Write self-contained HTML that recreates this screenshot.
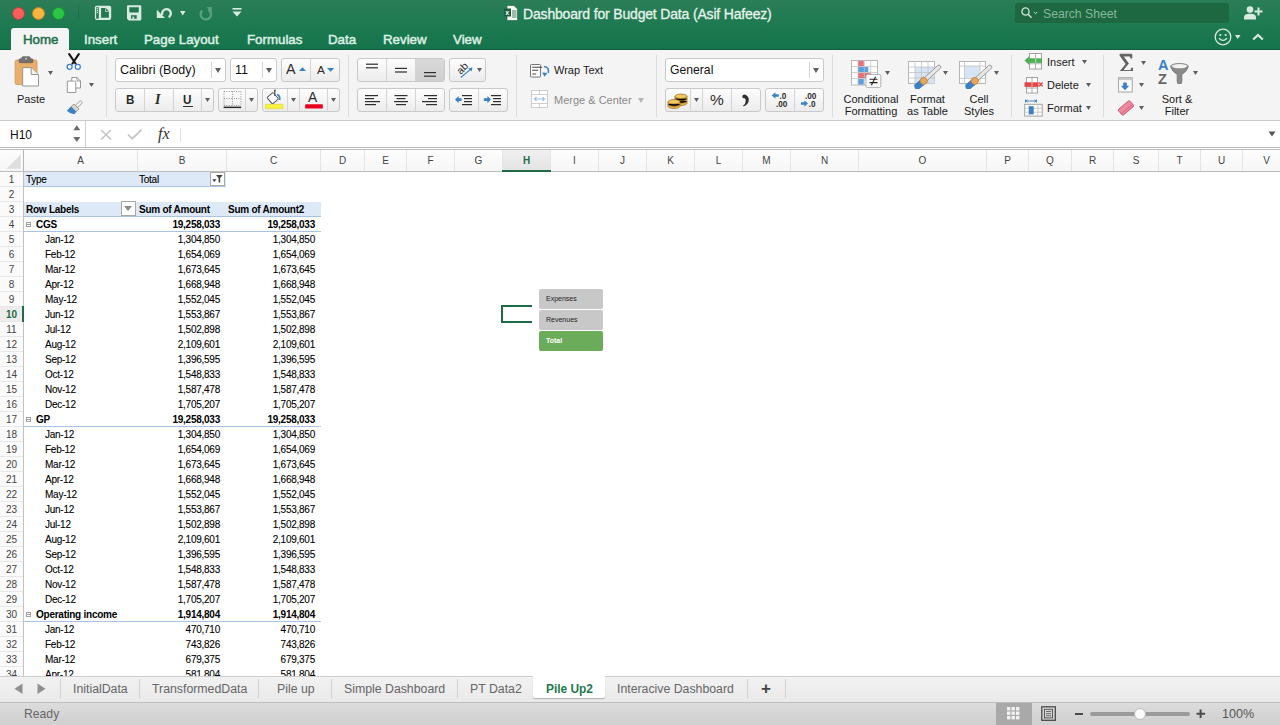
<!DOCTYPE html><html><head><meta charset="utf-8"><style>
*{margin:0;padding:0;box-sizing:border-box}
html,body{width:1280px;height:725px;overflow:hidden;background:#fff;font-family:"Liberation Sans",sans-serif;}
.a{position:absolute}
#title{left:0;top:0;width:1280px;height:50px;background:linear-gradient(#2b7d57,#1d7a51 50%,#15734b);}
.tl{position:absolute;top:7px;width:12px;height:12px;border-radius:50%}
.tab{position:absolute;top:29px;height:22px;font-size:13.3px;color:#dfece4;line-height:22px;white-space:nowrap;-webkit-text-stroke:0.5px}
#ribbon{left:0;top:50px;width:1280px;height:71px;background:#f4f4f4;border-bottom:1px solid #c9c9c9}
.sep{position:absolute;width:1px;background:#dcdcdc;top:55px;height:62px}
.btn{position:absolute;border:1px solid #c9c9c9;border-radius:3px;background:linear-gradient(#fdfdfd,#ececec)}
.box{position:absolute;border:1px solid #c9c9c9;border-radius:3px;background:#fff}
.dv{position:absolute;width:1px;background:#d4d4d4}
.rl{position:absolute;font-size:11px;color:#1a1a1a;white-space:nowrap;line-height:13px;margin-top:1px}
.tri{position:absolute;width:0;height:0;border-left:3.5px solid transparent;border-right:3.5px solid transparent;border-top:5px solid #5f5f5f}
#fbar{left:0;top:121px;width:1280px;height:26px;background:#fff}
#colhdr{left:0;top:150px;width:1280px;height:22px;background:linear-gradient(#fdfdfd,#f6f6f6);border-bottom:1px solid #bdbdbd}
.ch{position:absolute;top:150px;height:21px;font-size:10px;color:#444;text-align:center;line-height:22px;border-right:1px solid #e4e4e4}
.rh{position:absolute;left:0;width:23px;height:15px;font-size:10px;color:#444;text-align:center;line-height:15px;border-bottom:1px solid #e8e8e8;background:#fafafa}
.c{position:absolute;height:15px;font-size:10px;line-height:15px;margin-top:0px;letter-spacing:-0.25px;color:#000;white-space:nowrap;-webkit-text-stroke:0.1px #000}
.b{-webkit-text-stroke:0}
.r{text-align:right}
.b{font-weight:bold}
#tabs{left:0;top:676px;width:1280px;height:26px;background:linear-gradient(#f2f2f2,#e9e9e9);border-top:1px solid #cfcfcf}
.st{position:absolute;top:0;height:25px;line-height:26px;font-size:12.3px;color:#666;white-space:nowrap}
.sd{position:absolute;top:3px;width:1px;height:19px;background:#d2d2d2}
#status{left:0;top:702px;width:1280px;height:23px;background:linear-gradient(#dcdcdc,#cfcfcf);border-top:1px solid #bdbdbd}
</style></head><body>
<div id="title" class="a"></div>
<div class="a" style="left:0;top:49px;width:1280px;height:1px;background:#14603e"></div>
<div class="tl" style="left:12px;top:7px;width:13px;height:13px;background:#f5605c;border:1px solid #b8423c"></div>
<div class="tl" style="left:32px;top:7px;width:13px;height:13px;background:#fbb53e;border:1px solid #b8862a"></div>
<div class="tl" style="left:52px;top:7px;width:13px;height:13px;background:#2bc544;border:1px solid #1d8f33"></div>
<div class="a" style="left:78px;top:4px;width:1px;height:17px;background:#246f4b"></div>
<div class="a" style="left:523px;top:5px;font-size:14px;letter-spacing:-0.17px;color:#e4f5ec;line-height:18px;white-space:nowrap;-webkit-text-stroke:0.3px #e7f1eb">Dashboard for Budget Data (Asif Hafeez)</div>
<div class="a" style="left:1015px;top:3px;width:214px;height:20px;border-radius:3px;background:#1d6841"></div>
<div class="a" style="left:1043px;top:5px;font-size:12.2px;color:#86b89c;line-height:18px">Search Sheet</div>
<div class="a" style="left:11px;top:28px;width:58px;height:22px;background:#f4f4f4;border-radius:3px 3px 0 0"></div>
<div class="tab" style="left:23px;color:#216e4a">Home</div>
<div class="tab" style="left:84px;color:#dcefe3">Insert</div>
<div class="tab" style="left:144px;color:#dcefe3">Page Layout</div>
<div class="tab" style="left:247px;color:#dcefe3">Formulas</div>
<div class="tab" style="left:328px;color:#dcefe3">Data</div>
<div class="tab" style="left:383px;color:#dcefe3">Review</div>
<div class="tab" style="left:453px;color:#dcefe3">View</div>
<div id="ribbon" class="a"></div>
<div class="sep" style="left:106px"></div>
<div class="sep" style="left:348px"></div>
<div class="sep" style="left:516px"></div>
<div class="sep" style="left:656px"></div>
<div class="sep" style="left:832px"></div>
<div class="sep" style="left:1011px"></div>
<div class="sep" style="left:1103px"></div>
<div class="rl" style="left:17px;top:92px">Paste</div>
<div class="box" style="left:115px;top:58px;width:111px;height:24px"></div>
<div class="dv" style="left:211px;top:62px;height:16px"></div>
<div class="a" style="left:120px;top:63px;font-size:12.5px;color:#111;line-height:14px">Calibri (Body)</div>
<div class="tri" style="left:215px;top:68px"></div>
<div class="box" style="left:230px;top:58px;width:47px;height:24px"></div>
<div class="dv" style="left:262px;top:62px;height:16px"></div>
<div class="a" style="left:235px;top:63px;font-size:12.5px;color:#111;line-height:14px">11</div>
<div class="tri" style="left:266px;top:68px"></div>
<div class="btn" style="left:281px;top:58px;width:59px;height:24px"></div>
<div class="dv" style="left:310px;top:59px;height:22px"></div>
<div class="btn" style="left:115px;top:88px;width:99px;height:24px"></div>
<div class="dv" style="left:144px;top:89px;height:22px"></div>
<div class="dv" style="left:173px;top:89px;height:22px"></div>
<div class="dv" style="left:201px;top:89px;height:22px"></div>
<div class="btn" style="left:218px;top:88px;width:40px;height:24px"></div>
<div class="dv" style="left:245px;top:89px;height:22px"></div>
<div class="btn" style="left:262px;top:88px;width:78px;height:24px"></div>
<div class="dv" style="left:287px;top:89px;height:22px"></div>
<div class="dv" style="left:299px;top:89px;height:22px"></div>
<div class="dv" style="left:327px;top:89px;height:22px"></div>
<div class="btn" style="left:357px;top:58px;width:88px;height:24px"></div>
<div class="a" style="left:416px;top:59px;width:28px;height:22px;background:linear-gradient(#d9d9d9,#cfcfcf);border-radius:0 2px 2px 0"></div>
<div class="dv" style="left:386px;top:59px;height:22px"></div>
<div class="dv" style="left:415px;top:59px;height:22px"></div>
<div class="btn" style="left:449px;top:58px;width:37px;height:24px"></div>
<div class="btn" style="left:357px;top:88px;width:88px;height:24px"></div>
<div class="dv" style="left:386px;top:89px;height:22px"></div>
<div class="dv" style="left:415px;top:89px;height:22px"></div>
<div class="btn" style="left:449px;top:88px;width:59px;height:24px"></div>
<div class="dv" style="left:478px;top:89px;height:22px"></div>
<div class="rl" style="left:554px;top:63px">Wrap Text</div>
<div class="rl" style="left:554px;top:93px;color:#8a8a8a">Merge &amp; Center</div>
<div class="tri" style="left:638px;top:98px;border-top-color:#b5b5b5"></div>
<div class="box" style="left:665px;top:58px;width:159px;height:24px"></div>
<div class="dv" style="left:809px;top:62px;height:16px"></div>
<div class="a" style="left:670px;top:63px;font-size:12.2px;color:#111;line-height:14px">General</div>
<div class="tri" style="left:813px;top:68px"></div>
<div class="btn" style="left:665px;top:88px;width:96px;height:24px"></div>
<div class="dv" style="left:690px;top:89px;height:22px"></div>
<div class="dv" style="left:702px;top:89px;height:22px"></div>
<div class="dv" style="left:731px;top:89px;height:22px"></div>
<div class="btn" style="left:765px;top:88px;width:59px;height:24px"></div>
<div class="dv" style="left:794px;top:89px;height:22px"></div>
<div class="rl" style="left:842px;top:92px;width:58px;text-align:center;line-height:12px">Conditional<br>Formatting</div>
<div class="rl" style="left:906px;top:92px;width:43px;text-align:center;line-height:12px">Format<br>as Table</div>
<div class="rl" style="left:959px;top:92px;width:40px;text-align:center;line-height:12px">Cell<br>Styles</div>
<div class="rl" style="left:1047px;top:55px">Insert</div>
<div class="rl" style="left:1047px;top:78px">Delete</div>
<div class="rl" style="left:1047px;top:101px">Format</div>
<div class="rl" style="left:1159px;top:92px;width:36px;text-align:center;line-height:12px">Sort &amp;<br>Filter</div>
<div id="fbar" class="a"></div>
<div class="a" style="left:85px;top:121px;width:1px;height:26px;background:#d0d0d0"></div>
<div class="a" style="left:10px;top:128px;font-size:12px;color:#111;line-height:14px">H10</div>
<div class="a" style="left:0;top:147px;width:1280px;height:1px;background:#bdbdbd"></div>
<div class="a" style="left:0;top:149px;width:1280px;height:1px;background:#bdbdbd"></div>
<div id="colhdr" class="a"></div>
<div class="ch" style="left:24px;width:114px;">A</div>
<div class="ch" style="left:138px;width:89px;">B</div>
<div class="ch" style="left:227px;width:94px;">C</div>
<div class="ch" style="left:321px;width:44px;">D</div>
<div class="ch" style="left:365px;width:42px;">E</div>
<div class="ch" style="left:407px;width:48px;">F</div>
<div class="ch" style="left:455px;width:48px;">G</div>
<div class="ch" style="left:503px;width:48px;color:#1e6b45;font-weight:bold;background:linear-gradient(#f0f0f0,#e3e3e3);">H</div>
<div class="ch" style="left:551px;width:48px;">I</div>
<div class="ch" style="left:599px;width:48px;">J</div>
<div class="ch" style="left:647px;width:48px;">K</div>
<div class="ch" style="left:695px;width:48px;">L</div>
<div class="ch" style="left:743px;width:48px;">M</div>
<div class="ch" style="left:791px;width:68px;">N</div>
<div class="ch" style="left:859px;width:128px;">O</div>
<div class="ch" style="left:987px;width:42px;">P</div>
<div class="ch" style="left:1029px;width:43px;">Q</div>
<div class="ch" style="left:1072px;width:42px;">R</div>
<div class="ch" style="left:1114px;width:45px;">S</div>
<div class="ch" style="left:1159px;width:42px;">T</div>
<div class="ch" style="left:1201px;width:42px;">U</div>
<div class="ch" style="left:1243px;width:48px;">V</div>
<div class="a" style="left:502px;top:170px;width:49px;height:2px;background:#1e6b45"></div>
<div class="a" style="left:0;top:150px;width:24px;height:22px;background:linear-gradient(#fdfdfd,#f6f6f6);border-right:1px solid #b5b5b5;border-bottom:1px solid #bdbdbd"></div>
<svg class="a" style="left:6px;top:154px" width="15" height="15"><path d="M0.5 14.7h14.3v-14.2z" fill="#dedede"/></svg>
<div class="a" style="left:23px;top:171px;width:1px;height:505px;background:#c2c2c2"></div>
<div class="rh" style="top:172px;">1</div>
<div class="rh" style="top:187px;">2</div>
<div class="rh" style="top:202px;">3</div>
<div class="rh" style="top:217px;">4</div>
<div class="rh" style="top:232px;">5</div>
<div class="rh" style="top:247px;">6</div>
<div class="rh" style="top:262px;">7</div>
<div class="rh" style="top:277px;">8</div>
<div class="rh" style="top:292px;">9</div>
<div class="rh" style="top:307px;color:#1e6b45;font-weight:bold;background:#ececec;">10</div>
<div class="rh" style="top:322px;">11</div>
<div class="rh" style="top:337px;">12</div>
<div class="rh" style="top:352px;">13</div>
<div class="rh" style="top:367px;">14</div>
<div class="rh" style="top:382px;">15</div>
<div class="rh" style="top:397px;">16</div>
<div class="rh" style="top:412px;">17</div>
<div class="rh" style="top:427px;">18</div>
<div class="rh" style="top:442px;">19</div>
<div class="rh" style="top:457px;">20</div>
<div class="rh" style="top:472px;">21</div>
<div class="rh" style="top:487px;">22</div>
<div class="rh" style="top:502px;">23</div>
<div class="rh" style="top:517px;">24</div>
<div class="rh" style="top:532px;">25</div>
<div class="rh" style="top:547px;">26</div>
<div class="rh" style="top:562px;">27</div>
<div class="rh" style="top:577px;">28</div>
<div class="rh" style="top:592px;">29</div>
<div class="rh" style="top:607px;">30</div>
<div class="rh" style="top:622px;">31</div>
<div class="rh" style="top:637px;">32</div>
<div class="rh" style="top:652px;">33</div>
<div class="rh" style="top:667px;">34</div>
<div class="a" style="left:22px;top:306px;width:2px;height:16px;background:#1e6b45"></div>
<div class="a" style="left:24px;top:172px;width:202px;height:14px;background:#dde9f6"></div>
<div class="a" style="left:24px;top:186px;width:202px;height:1px;background:#a8c4e4"></div>
<div class="c" style="left:26px;top:172px">Type</div>
<div class="c" style="left:139px;top:172px">Total</div>
<div class="a" style="left:210px;top:172px;width:15px;height:14px;border:1px solid #a9a9a9;background:#fff"></div>
<div class="a" style="left:24px;top:202px;width:297px;height:14px;background:#dde9f6"></div>
<div class="a" style="left:24px;top:216px;width:297px;height:1px;background:#a8c4e4"></div>
<div class="c b" style="left:26px;top:202px">Row Labels</div>
<div class="a" style="left:121px;top:201px;width:15px;height:15px;border:1px solid #a9a9a9;background:#fff"></div>
<div class="tri" style="left:124px;top:206px;border-left-width:4.5px;border-right-width:4.5px;border-top:5px solid #8a8a8a"></div>
<div class="c b" style="left:139px;top:202px">Sum of Amount</div>
<div class="c b" style="left:228px;top:202px">Sum of Amount2</div>
<div class="a" style="left:26px;top:222px;width:5px;height:5px;border:1px solid #a0a0a0"></div>
<div class="a" style="left:27px;top:224px;width:3px;height:1px;background:#a0a0a0"></div>
<div class="c b" style="left:36px;top:217px">CGS</div>
<div class="c b r" style="left:137px;width:83px;top:217px">19,258,033</div>
<div class="c b r" style="left:226px;width:89px;top:217px">19,258,033</div>
<div class="a" style="left:24px;top:231px;width:297px;height:1px;background:#a8c4e4"></div>
<div class="c" style="left:45px;top:232px">Jan-12</div>
<div class="c r" style="left:137px;width:83px;top:232px">1,304,850</div>
<div class="c r" style="left:226px;width:89px;top:232px">1,304,850</div>
<div class="c" style="left:45px;top:247px">Feb-12</div>
<div class="c r" style="left:137px;width:83px;top:247px">1,654,069</div>
<div class="c r" style="left:226px;width:89px;top:247px">1,654,069</div>
<div class="c" style="left:45px;top:262px">Mar-12</div>
<div class="c r" style="left:137px;width:83px;top:262px">1,673,645</div>
<div class="c r" style="left:226px;width:89px;top:262px">1,673,645</div>
<div class="c" style="left:45px;top:277px">Apr-12</div>
<div class="c r" style="left:137px;width:83px;top:277px">1,668,948</div>
<div class="c r" style="left:226px;width:89px;top:277px">1,668,948</div>
<div class="c" style="left:45px;top:292px">May-12</div>
<div class="c r" style="left:137px;width:83px;top:292px">1,552,045</div>
<div class="c r" style="left:226px;width:89px;top:292px">1,552,045</div>
<div class="c" style="left:45px;top:307px">Jun-12</div>
<div class="c r" style="left:137px;width:83px;top:307px">1,553,867</div>
<div class="c r" style="left:226px;width:89px;top:307px">1,553,867</div>
<div class="c" style="left:45px;top:322px">Jul-12</div>
<div class="c r" style="left:137px;width:83px;top:322px">1,502,898</div>
<div class="c r" style="left:226px;width:89px;top:322px">1,502,898</div>
<div class="c" style="left:45px;top:337px">Aug-12</div>
<div class="c r" style="left:137px;width:83px;top:337px">2,109,601</div>
<div class="c r" style="left:226px;width:89px;top:337px">2,109,601</div>
<div class="c" style="left:45px;top:352px">Sep-12</div>
<div class="c r" style="left:137px;width:83px;top:352px">1,396,595</div>
<div class="c r" style="left:226px;width:89px;top:352px">1,396,595</div>
<div class="c" style="left:45px;top:367px">Oct-12</div>
<div class="c r" style="left:137px;width:83px;top:367px">1,548,833</div>
<div class="c r" style="left:226px;width:89px;top:367px">1,548,833</div>
<div class="c" style="left:45px;top:382px">Nov-12</div>
<div class="c r" style="left:137px;width:83px;top:382px">1,587,478</div>
<div class="c r" style="left:226px;width:89px;top:382px">1,587,478</div>
<div class="c" style="left:45px;top:397px">Dec-12</div>
<div class="c r" style="left:137px;width:83px;top:397px">1,705,207</div>
<div class="c r" style="left:226px;width:89px;top:397px">1,705,207</div>
<div class="a" style="left:26px;top:417px;width:5px;height:5px;border:1px solid #a0a0a0"></div>
<div class="a" style="left:27px;top:419px;width:3px;height:1px;background:#a0a0a0"></div>
<div class="c b" style="left:36px;top:412px">GP</div>
<div class="c b r" style="left:137px;width:83px;top:412px">19,258,033</div>
<div class="c b r" style="left:226px;width:89px;top:412px">19,258,033</div>
<div class="a" style="left:24px;top:426px;width:297px;height:1px;background:#a8c4e4"></div>
<div class="c" style="left:45px;top:427px">Jan-12</div>
<div class="c r" style="left:137px;width:83px;top:427px">1,304,850</div>
<div class="c r" style="left:226px;width:89px;top:427px">1,304,850</div>
<div class="c" style="left:45px;top:442px">Feb-12</div>
<div class="c r" style="left:137px;width:83px;top:442px">1,654,069</div>
<div class="c r" style="left:226px;width:89px;top:442px">1,654,069</div>
<div class="c" style="left:45px;top:457px">Mar-12</div>
<div class="c r" style="left:137px;width:83px;top:457px">1,673,645</div>
<div class="c r" style="left:226px;width:89px;top:457px">1,673,645</div>
<div class="c" style="left:45px;top:472px">Apr-12</div>
<div class="c r" style="left:137px;width:83px;top:472px">1,668,948</div>
<div class="c r" style="left:226px;width:89px;top:472px">1,668,948</div>
<div class="c" style="left:45px;top:487px">May-12</div>
<div class="c r" style="left:137px;width:83px;top:487px">1,552,045</div>
<div class="c r" style="left:226px;width:89px;top:487px">1,552,045</div>
<div class="c" style="left:45px;top:502px">Jun-12</div>
<div class="c r" style="left:137px;width:83px;top:502px">1,553,867</div>
<div class="c r" style="left:226px;width:89px;top:502px">1,553,867</div>
<div class="c" style="left:45px;top:517px">Jul-12</div>
<div class="c r" style="left:137px;width:83px;top:517px">1,502,898</div>
<div class="c r" style="left:226px;width:89px;top:517px">1,502,898</div>
<div class="c" style="left:45px;top:532px">Aug-12</div>
<div class="c r" style="left:137px;width:83px;top:532px">2,109,601</div>
<div class="c r" style="left:226px;width:89px;top:532px">2,109,601</div>
<div class="c" style="left:45px;top:547px">Sep-12</div>
<div class="c r" style="left:137px;width:83px;top:547px">1,396,595</div>
<div class="c r" style="left:226px;width:89px;top:547px">1,396,595</div>
<div class="c" style="left:45px;top:562px">Oct-12</div>
<div class="c r" style="left:137px;width:83px;top:562px">1,548,833</div>
<div class="c r" style="left:226px;width:89px;top:562px">1,548,833</div>
<div class="c" style="left:45px;top:577px">Nov-12</div>
<div class="c r" style="left:137px;width:83px;top:577px">1,587,478</div>
<div class="c r" style="left:226px;width:89px;top:577px">1,587,478</div>
<div class="c" style="left:45px;top:592px">Dec-12</div>
<div class="c r" style="left:137px;width:83px;top:592px">1,705,207</div>
<div class="c r" style="left:226px;width:89px;top:592px">1,705,207</div>
<div class="a" style="left:26px;top:612px;width:5px;height:5px;border:1px solid #a0a0a0"></div>
<div class="a" style="left:27px;top:614px;width:3px;height:1px;background:#a0a0a0"></div>
<div class="c b" style="left:36px;top:607px">Operating income</div>
<div class="c b r" style="left:137px;width:83px;top:607px">1,914,804</div>
<div class="c b r" style="left:226px;width:89px;top:607px">1,914,804</div>
<div class="a" style="left:24px;top:621px;width:297px;height:1px;background:#a8c4e4"></div>
<div class="c" style="left:45px;top:622px">Jan-12</div>
<div class="c r" style="left:137px;width:83px;top:622px">470,710</div>
<div class="c r" style="left:226px;width:89px;top:622px">470,710</div>
<div class="c" style="left:45px;top:637px">Feb-12</div>
<div class="c r" style="left:137px;width:83px;top:637px">743,826</div>
<div class="c r" style="left:226px;width:89px;top:637px">743,826</div>
<div class="c" style="left:45px;top:652px">Mar-12</div>
<div class="c r" style="left:137px;width:83px;top:652px">679,375</div>
<div class="c r" style="left:226px;width:89px;top:652px">679,375</div>
<div class="c" style="left:45px;top:667px">Apr-12</div>
<div class="c r" style="left:137px;width:83px;top:667px">581,804</div>
<div class="c r" style="left:226px;width:89px;top:667px">581,804</div>
<div class="a" style="left:501px;top:305px;width:40px;height:18px;border:2px solid #1e6b45;border-right:none"></div>
<div class="a" style="left:532px;top:283px;width:78px;height:75px;background:#fff"></div>
<div class="a" style="left:539px;top:289px;width:64px;height:20px;border-radius:2px;background:#c8c8c8"></div>
<div class="a" style="left:546px;top:289px;height:20px;line-height:20px;font-size:7px;color:#222;font-weight:normal">Expenses</div>
<div class="a" style="left:539px;top:310px;width:64px;height:20px;border-radius:2px;background:#c8c8c8"></div>
<div class="a" style="left:546px;top:310px;height:20px;line-height:20px;font-size:7px;color:#222;font-weight:normal">Revenues</div>
<div class="a" style="left:539px;top:331px;width:64px;height:20px;border-radius:2px;background:#6aac5a"></div>
<div class="a" style="left:546px;top:331px;height:20px;line-height:20px;font-size:7px;color:#fff;font-weight:bold">Total</div>
<div id="tabs" class="a"></div>
<div class="sd" style="left:60px;top:679px"></div>
<div class="a" style="left:533px;top:676px;width:72px;height:22px;background:#fff;box-shadow:0 1px 1px rgba(0,0,0,.25);border-radius:0 0 2px 2px"></div>
<div class="st" style="left:73px;top:676px">InitialData</div>
<div class="sd" style="left:139px;top:679px"></div>
<div class="st" style="left:152px;top:676px">TransformedData</div>
<div class="sd" style="left:258px;top:679px"></div>
<div class="st" style="left:277px;top:676px">Pile up</div>
<div class="sd" style="left:331px;top:679px"></div>
<div class="st" style="left:344px;top:676px">Simple Dashboard</div>
<div class="sd" style="left:457px;top:679px"></div>
<div class="st" style="left:470px;top:676px">PT Data2</div>
<div class="st" style="left:546px;top:676px;color:#1e7a4c;font-weight:bold;font-size:11.9px">Pile Up2</div>
<div class="st" style="left:617px;top:676px">Interacive Dashboard</div>
<div class="sd" style="left:747px;top:679px"></div>
<div class="st" style="left:761px;top:676px;color:#444;font-size:17px;font-weight:bold">+</div>
<div class="sd" style="left:785px;top:679px"></div>
<div id="status" class="a"></div>
<div class="a" style="left:24px;top:705px;font-size:12.2px;color:#666;line-height:18px">Ready</div>
<div class="a" style="left:996px;top:703px;width:36px;height:22px;background:#a9a9a9"></div>
<div class="a" style="left:1222px;top:705px;font-size:12.6px;color:#555;line-height:18px">100%</div>
<div class="a" style="left:1090px;top:712px;width:100px;height:4px;border-radius:2px;background:#9a9a9a"></div>
<div class="a" style="left:1134px;top:708px;width:12px;height:12px;border-radius:50%;background:#fafafa;border:1px solid #b9b9b9"></div>
<svg class="a" style="left:94px;top:5px" width="18" height="16" viewBox="0 0 18 16"><rect x="0.9" y="0.7" width="16.3" height="14.2" rx="1.8" fill="#d9ebe0"/><rect x="2.2" y="2.2" width="2.6" height="11.4" fill="#237650"/><circle cx="3.4" cy="3.6" r="0.75" fill="#d9ebe0"/><circle cx="3.4" cy="5.6" r="0.75" fill="#d9ebe0"/><circle cx="3.4" cy="7.6" r="0.75" fill="#d9ebe0"/><path d="M7.1 3h4.6l3.2 3.2v6.6h-7.8z" fill="#237650"/><path d="M11.2 3l3.7 3.7h-3.7z" fill="#d9ebe0"/><path d="M11.9 3.6l2.4 2.4h-2.4z" fill="#237650"/></svg>
<svg class="a" style="left:127px;top:5px" width="15" height="16" viewBox="0 0 15 16"><path d="M0 1.5a1.2 1.2 0 0 1 1.2-1.2h11.9a1.2 1.2 0 0 1 1.2 1.2v12.7a1.2 1.2 0 0 1-1.2 1.2h-11.4l-1.7-1.7z" fill="#d9ebe0"/><path d="M2.3 2.2h9.5v4.3a1 1 0 0 1-1 1h-7.5a1 1 0 0 1-1-1z" fill="#237650"/><path d="M4 10.2h5.7v3.6h-5.7z" fill="#237650"/><rect x="5.3" y="11.7" width="1.9" height="2.1" fill="#d9ebe0"/></svg>
<svg class="a" style="left:156px;top:8px" width="17" height="12" viewBox="0 0 17 12"><path d="M6.46 6.97 A4.3 4.3 0 1 1 12.65 9.22" fill="none" stroke="#d9ebe0" stroke-width="2.3"/><path d="M0.8 1.65v8.45h8.2z" fill="#d9ebe0"/></svg>
<svg class="a" style="left:180px;top:11px" width="6" height="5" viewBox="0 0 6 5"><path d="M0 0h5.5l-2.75 4.5z" fill="#d9ebe0"/></svg>
<svg class="a" style="left:199px;top:6px" width="15" height="15" viewBox="0 0 15 15"><path d="M3.1 4.6 A5.2 5.2 0 1 0 9.4 3.8" fill="none" stroke="#5aa37d" stroke-width="2.2"/><path d="M7.8 1.3l4.9-0.4v5.6z" fill="#5aa37d"/></svg>
<svg class="a" style="left:232px;top:8px" width="10" height="9" viewBox="0 0 10 9"><rect x="0.5" y="0" width="9" height="1.6" fill="#d9ebe0"/><path d="M0.5 3.5h9l-4.5 5z" fill="#d9ebe0"/></svg>
<svg class="a" style="left:504px;top:5px" width="14" height="16" viewBox="0 0 14 16"><path d="M3 0.5h7l3.5 3.5v11.5h-10.5z" fill="#f4f8f5" stroke="#1d5e3a" stroke-width="0.6"/><rect x="0" y="3.5" width="7" height="8" fill="#1d5e3a"/><text x="1.2" y="10" font-size="7" font-family="Liberation Sans" font-weight="bold" fill="#fff">x</text><path d="M8 6h4.5M8 8h4.5M8 10h4.5M8 12h4.5" stroke="#1d5e3a" stroke-width="0.8"/></svg>
<svg class="a" style="left:1021px;top:7px" width="18" height="12" viewBox="0 0 18 12"><circle cx="4.5" cy="4.5" r="3.6" fill="none" stroke="#cfe3d7" stroke-width="1.3"/><path d="M7 7l3.5 3.8" stroke="#cfe3d7" stroke-width="1.4"/><path d="M12.8 5l1.7 1.7 1.7-1.7" fill="none" stroke="#cfe3d7" stroke-width="1"/></svg>
<svg class="a" style="left:1244px;top:6px" width="19" height="14" viewBox="0 0 19 14"><circle cx="6" cy="3.6" r="3.3" fill="#d9ebe0"/><path d="M0 13.5v-2.2c0-2.5 2.4-3.6 6-3.6s6 1.1 6 3.6v2.2z" fill="#d9ebe0"/><path d="M14.5 1.5v8M10.5 5.5h8" stroke="#d9ebe0" stroke-width="2"/></svg>
<svg class="a" style="left:1214px;top:28px" width="18" height="18" viewBox="0 0 18 18"><circle cx="9" cy="9" r="7.8" fill="none" stroke="#d9ebe0" stroke-width="1.3"/><circle cx="6.3" cy="7" r="1.1" fill="#d9ebe0"/><circle cx="11.7" cy="7" r="1.1" fill="#d9ebe0"/><path d="M5 10.3q4 4.2 8 0" fill="none" stroke="#d9ebe0" stroke-width="1.3"/></svg>
<svg class="a" style="left:1235px;top:35px" width="6" height="5" viewBox="0 0 6 5"><path d="M0 0h5.5l-2.75 4z" fill="#d9ebe0"/></svg>
<svg class="a" style="left:1252px;top:33px" width="12" height="8" viewBox="0 0 12 8"><path d="M1.2 6.5l4.8-4.5 4.8 4.5" fill="none" stroke="#d9ebe0" stroke-width="2.2"/></svg>
<svg class="a" style="left:14px;top:56px" width="26" height="32" viewBox="0 0 26 32"><rect x="1.2" y="4" width="21.8" height="24.6" rx="1.6" fill="#eaae6b" stroke="#cf9250" stroke-width="0.8"/><path d="M5.1 5.5v-1.6a1.2 1.2 0 0 1 1.2-1.2h1.6v-1a1 1 0 0 1 1-1h6.2a1 1 0 0 1 1 1v1h1.6a1.2 1.2 0 0 1 1.2 1.2v1.6a1.2 1.2 0 0 1-1.2 1.2h-11.4a1.2 1.2 0 0 1-1.2-1.2z" fill="#727272" stroke="#5a5050" stroke-width="0.6"/><circle cx="12" cy="2.6" r="0.9" fill="#d8d8d8"/><path d="M8.7 11.7h8.5l7.3 7v11.3h-15.8z" fill="#fff" stroke="#8c8c8c" stroke-width="0.9"/><path d="M17.2 11.7v6.8h7.3" fill="#f3f0ea" stroke="#8c8c8c" stroke-width="0.9"/></svg>
<svg class="a" style="left:48px;top:71px" width="5" height="4" viewBox="0 0 5 4"><path d="M0 0h5l-2.5 4z" fill="#5f5f5f"/></svg>
<svg class="a" style="left:66px;top:53px" width="16" height="17" viewBox="0 0 16 17"><path d="M3.2 1.2l6.3 9.3M12.8 1.2l-6.3 9.3" stroke="#151515" stroke-width="2.1" stroke-linecap="round"/><circle cx="3.6" cy="13.8" r="2.5" fill="#fff" stroke="#3a80c6" stroke-width="1.3"/><circle cx="11.8" cy="13.8" r="2.5" fill="#fff" stroke="#3a80c6" stroke-width="1.3"/></svg>
<svg class="a" style="left:66px;top:77px" width="16" height="17" viewBox="0 0 16 17"><path d="M5.8 0.5h5.2l3.5 3.5v7h-8.7z" fill="#fff" stroke="#8c8c8c" stroke-width="0.9"/><path d="M11 0.5v3.5h3.5" fill="none" stroke="#8c8c8c" stroke-width="0.9"/><path d="M1.3 4.1h7.5a1 1 0 0 1 1 1v10.4h-8.5z" fill="#fff" stroke="#8c8c8c" stroke-width="0.9"/></svg>
<svg class="a" style="left:89px;top:83px" width="5" height="4" viewBox="0 0 5 4"><path d="M0 0h5l-2.5 4z" fill="#5f5f5f"/></svg>
<svg class="a" style="left:64px;top:99px" width="20" height="18" viewBox="0 0 20 18"><g transform="translate(10.5 9.5) rotate(45)"><rect x="-1.6" y="-10" width="3.2" height="7.5" rx="1.5" fill="#f4f4f4" stroke="#8d8d8d" stroke-width="0.8"/><path d="M-3.6 -2.8h7.2v4h-7.2z" fill="#dcd6ce" stroke="#8d8d8d" stroke-width="0.8"/><path d="M-3.9 1.2h7.8v3.2q-3.9 2.6-7.8 2.6z" fill="#3d7fc6"/></g></svg>
<div class="a" style="left:126px;top:92px;font-size:13.5px;font-weight:bold;color:#2b2b2b;line-height:16px;transform:scaleX(0.86);transform-origin:0 0">B</div>
<div class="a" style="left:155px;top:92px;font-family:'Liberation Serif',serif;font-size:14px;font-weight:bold;font-style:italic;color:#2b2b2b;line-height:16px">I</div>
<div class="a" style="left:183px;top:92px;font-size:13px;color:#2b2b2b;line-height:16px;font-weight:bold;transform:scaleX(0.9);transform-origin:0 0">U</div>
<div class="a" style="left:183px;top:106px;width:10px;height:1px;background:#333"></div>
<svg class="a" style="left:205px;top:98px" width="5" height="4" viewBox="0 0 5 4"><path d="M0 0h5l-2.5 4z" fill="#5f5f5f"/></svg>
<div class="a" style="left:286px;top:61px;font-size:14.3px;color:#2b2b2b;line-height:17px">A</div>
<svg class="a" style="left:299px;top:67px" width="8" height="5" viewBox="0 0 8 5"><path d="M0 4h7l-3.5-3.8z" fill="#3a80c6"/></svg>
<div class="a" style="left:317px;top:63px;font-size:11.8px;color:#2b2b2b;line-height:14px">A</div>
<svg class="a" style="left:327px;top:68px" width="8" height="4" viewBox="0 0 8 4"><path d="M0 0h7.2l-3.6 3.8z" fill="#3a80c6"/></svg>
<svg class="a" style="left:223px;top:90px" width="19" height="19" viewBox="0 0 19 19"><path d="M1 1.5h17M1 8.5h17M1 15.5h17M1 1.5v14M9.5 1.5v14M18 1.5v14" stroke="#8a8a8a" stroke-width="0.9" stroke-dasharray="1 1.4" fill="none"/><rect x="0.6" y="16.6" width="17.6" height="1.5" fill="#2b2b2b"/></svg>
<svg class="a" style="left:249px;top:98px" width="5" height="4" viewBox="0 0 5 4"><path d="M0 0h5l-2.5 4z" fill="#5f5f5f"/></svg>
<svg class="a" style="left:265px;top:89px" width="19" height="21" viewBox="0 0 19 21"><g transform="rotate(-40 8 8)"><rect x="3" y="4.5" width="8" height="8.5" rx="0.8" fill="#fff" stroke="#555" stroke-width="1"/></g><path d="M9.8 1v6" stroke="#555" stroke-width="1.2"/><circle cx="9.8" cy="1.4" r="1" fill="#555"/><path d="M12 5.5q3.3 1 2.6 5.5" fill="none" stroke="#3a80c6" stroke-width="1.8"/><rect x="0.3" y="15.3" width="17.8" height="4.4" rx="0.6" fill="#f8f33c" stroke="#d6cf2a" stroke-width="0.5"/></svg>
<svg class="a" style="left:291px;top:98px" width="5" height="4" viewBox="0 0 5 4"><path d="M0 0h5l-2.5 4z" fill="#5f5f5f"/></svg>
<div class="a" style="left:308px;top:90px;font-size:13.8px;color:#2b2b2b;line-height:16px">A</div>
<svg class="a" style="left:305px;top:104px" width="18" height="5" viewBox="0 0 18 5"><rect x="0.2" y="0.2" width="17.6" height="4.4" rx="0.6" fill="#e8001c"/></svg>
<svg class="a" style="left:331px;top:98px" width="5" height="4" viewBox="0 0 5 4"><path d="M0 0h5l-2.5 4z" fill="#5f5f5f"/></svg>
<svg class="a" style="left:366px;top:63px" width="40" height="40" viewBox="0 0 40 40"><rect x="0" y="0.6" width="12" height="1.2" fill="#2e2e2e"/><rect x="0" y="4.2" width="12" height="1.2" fill="#2e2e2e"/></svg>
<svg class="a" style="left:395px;top:67px" width="40" height="40" viewBox="0 0 40 40"><rect x="0" y="0.8" width="12" height="1.2" fill="#2e2e2e"/><rect x="0" y="4.4" width="12" height="1.2" fill="#2e2e2e"/></svg>
<svg class="a" style="left:424px;top:71px" width="40" height="40" viewBox="0 0 40 40"><rect x="0" y="1" width="12" height="1.2" fill="#2e2e2e"/><rect x="0" y="4.6" width="12" height="1.2" fill="#2e2e2e"/></svg>
<svg class="a" style="left:365px;top:94px" width="40" height="40" viewBox="0 0 40 40"><rect x="0" y="1" width="13" height="1.2" fill="#2e2e2e"/><rect x="0" y="4" width="9" height="1.2" fill="#2e2e2e"/><rect x="0" y="7" width="15" height="1.2" fill="#2e2e2e"/><rect x="0" y="10" width="11" height="1.2" fill="#2e2e2e"/></svg>
<svg class="a" style="left:394px;top:94px" width="40" height="40" viewBox="0 0 40 40"><rect x="0.5" y="1" width="13.0" height="1.2" fill="#2e2e2e"/><rect x="2.5" y="4" width="9.0" height="1.2" fill="#2e2e2e"/><rect x="0" y="7" width="14" height="1.2" fill="#2e2e2e"/><rect x="2" y="10" width="10" height="1.2" fill="#2e2e2e"/></svg>
<svg class="a" style="left:422px;top:94px" width="40" height="40" viewBox="0 0 40 40"><rect x="2" y="1" width="13" height="1.2" fill="#2e2e2e"/><rect x="6" y="4" width="9" height="1.2" fill="#2e2e2e"/><rect x="0" y="7" width="15" height="1.2" fill="#2e2e2e"/><rect x="4" y="10" width="11" height="1.2" fill="#2e2e2e"/></svg>
<svg class="a" style="left:455px;top:94px" width="18" height="12" viewBox="0 0 18 12"><path d="M0 5.6l3.6-3.6v2.2h3v2.8h-3v2.2z" fill="#3a80c6"/><rect x="7" y="1" width="10" height="1.2" fill="#2e2e2e"/><rect x="9" y="4" width="8" height="1.2" fill="#2e2e2e"/><rect x="9" y="7" width="8" height="1.2" fill="#2e2e2e"/><rect x="7" y="10" width="10" height="1.2" fill="#2e2e2e"/></svg>
<svg class="a" style="left:483px;top:94px" width="18" height="12" viewBox="0 0 18 12"><path d="M8 5.6l-3.6-3.6v2.2h-3.6v2.8h3.6v2.2z" fill="#3a80c6"/><rect x="8" y="1" width="10" height="1.2" fill="#2e2e2e"/><rect x="10" y="4" width="8" height="1.2" fill="#2e2e2e"/><rect x="10" y="7" width="8" height="1.2" fill="#2e2e2e"/><rect x="8" y="10" width="10" height="1.2" fill="#2e2e2e"/></svg>
<div class="a" style="left:455px;top:62px;font-size:10.5px;color:#2e2e2e;line-height:12px;transform:rotate(-45deg);transform-origin:50% 50%;width:14px;text-align:center">ab</div>
<svg class="a" style="left:460px;top:67px" width="14" height="12" viewBox="0 0 14 12"><path d="M0.8 10.5L11 1.8" stroke="#3a80c6" stroke-width="1.1"/><path d="M12.5 0.5l-4.3 0.9 3.3 3.1z" fill="#3a80c6"/></svg>
<svg class="a" style="left:477px;top:68px" width="5" height="4" viewBox="0 0 5 4"><path d="M0 0h5l-2.5 4z" fill="#5f5f5f"/></svg>
<svg class="a" style="left:529px;top:63px" width="22" height="15" viewBox="0 0 22 15"><rect x="1.5" y="1.5" width="10" height="12.5" rx="0.8" fill="#fff" stroke="#666" stroke-width="0.9"/><path d="M3.2 4.3h10M3.2 7.2h6M3.2 11h4" stroke="#444" stroke-width="1.1"/><path d="M15 3.5q5.5 0.5 4.3 6.5" fill="none" stroke="#3a80c6" stroke-width="1.6"/><path d="M15.5 13.8l-2.3-4.2 5.2 0.4z" fill="#3a80c6"/></svg>
<svg class="a" style="left:531px;top:90px" width="18" height="19" viewBox="0 0 18 19"><rect x="0.5" y="0.5" width="16" height="17" fill="#fff" stroke="#c8c8c8" stroke-width="0.9"/><path d="M0.5 4.5h16M0.5 13.5h16M8.5 0.5v4M8.5 13.5v4" stroke="#c8c8c8" stroke-width="0.9"/><path d="M3.5 9h10M5.5 7l-2 2 2 2M11.5 7l2 2-2 2" fill="none" stroke="#9cbfe0" stroke-width="1.1"/></svg>
<svg class="a" style="left:667px;top:92px" width="21" height="17" viewBox="0 0 21 17"><g stroke="#9a6a1c" stroke-width="0.7"><ellipse cx="14" cy="11.3" rx="6" ry="2.2" fill="#e8b24a"/><rect x="8" y="4.3" width="12" height="7" fill="#e8b24a" stroke="none"/><path d="M8 4.3v7M20 4.3v7" /><path d="M8 6.6a6 2.2 0 0 0 12 0M8 8.9a6 2.2 0 0 0 12 0"/><ellipse cx="14" cy="4.3" rx="6" ry="2.2" fill="#f2c766"/><ellipse cx="7" cy="14.3" rx="6" ry="2.2" fill="#e8b24a"/><rect x="1" y="9.8" width="12" height="4.5" fill="#e8b24a" stroke="none"/><path d="M1 9.8v4.5M13 9.8v4.5"/><path d="M1 12a6 2.2 0 0 0 12 0"/><ellipse cx="7" cy="9.8" rx="6" ry="2.2" fill="#f2c766"/></g></svg>
<svg class="a" style="left:694px;top:98px" width="5" height="4" viewBox="0 0 5 4"><path d="M0 0h5l-2.5 4z" fill="#5f5f5f"/></svg>
<div class="a" style="left:710px;top:92px;font-size:15.5px;color:#2e2e2e;line-height:16px">%</div>
<svg class="a" style="left:741px;top:94px" width="10" height="13" viewBox="0 0 10 13"><path d="M1.8 1.3q1-1.2 2.6-0.6q3.6 1.6 3.4 5.6q-0.3 4.3-5.2 6.2l-0.6-0.8q2.8-2 2.8-5q0-1.9-1.7-2.6q-1.3 0.2-1.6-0.5q-0.4-1.3 0.3-2.3z" fill="#2e2e2e"/></svg>
<svg class="a" style="left:771px;top:92px" width="18" height="16" viewBox="0 0 18 16"><path d="M0.8 3.5l3.6-3.2v1.9h3.4v2.6h-3.4v1.9z" fill="#3a80c6"/><text x="8.5" y="6.8" font-size="8.2" font-family="Liberation Sans" font-weight="bold" fill="#2e2e2e">.0</text><text x="5" y="15" font-size="8.2" font-family="Liberation Sans" font-weight="bold" fill="#2e2e2e">.00</text></svg>
<svg class="a" style="left:800px;top:92px" width="18" height="16" viewBox="0 0 18 16"><text x="5" y="6.8" font-size="8.2" font-family="Liberation Sans" font-weight="bold" fill="#2e2e2e">.00</text><path d="M8 11.5l-3.6-3.2v1.9h-3.4v2.6h3.4v1.9z" fill="#3a80c6"/><text x="8.8" y="15" font-size="8.2" font-family="Liberation Sans" font-weight="bold" fill="#2e2e2e">.0</text></svg>
<svg class="a" style="left:851px;top:60px" width="31" height="29" viewBox="0 0 31 29"><rect x="0.5" y="0.5" width="26" height="24.5" fill="#fff" stroke="#b0b0b0" stroke-width="0.9"/><rect x="7" y="0.9" width="5.8" height="5.6" fill="#e76f78"/><rect x="7" y="6.8" width="10.3" height="5.6" fill="#5aa0e0"/><rect x="7" y="12.8" width="12.8" height="5.6" fill="#e76f78"/><rect x="7" y="18.8" width="5.8" height="5.8" fill="#5aa0e0"/><path d="M7 0.5v24.5M13.3 0.5v24.5M19.7 0.5v24.5M0.5 6.6h26M0.5 12.6h26M0.5 18.6h26" stroke="#c2c2c2" stroke-width="0.8"/><rect x="15" y="14.4" width="14.8" height="13" rx="1.5" fill="#fff" stroke="#a8a8a8" stroke-width="0.9"/><path d="M18.5 19.3h8M18.5 22.6h8M24.6 16.8l-4.2 8.4" stroke="#222" stroke-width="1.1"/></svg>
<svg class="a" style="left:885px;top:71px" width="5" height="4" viewBox="0 0 5 4"><path d="M0 0h5l-2.5 4z" fill="#5f5f5f"/></svg>
<svg class="a" style="left:908px;top:61px" width="34" height="28" viewBox="0 0 34 28"><rect x="0.5" y="0.5" width="26" height="22" fill="#fff" stroke="#b0b0b0" stroke-width="0.9"/><rect x="7" y="6" width="19.5" height="16.5" fill="#d6e5f5"/><path d="M7 0.5v22M13.5 0.5v22M20 0.5v22M0.5 6h26M0.5 11.5h26M0.5 17h26" stroke="#c2c2c2" stroke-width="0.8"/><g transform="translate(15.7 20) rotate(-42.5)"><rect x="1" y="-1.9" width="21.5" height="3.8" rx="1.9" fill="#e8e8e8" stroke="#8a8a8a" stroke-width="0.8"/><path d="M-2 -3.3L-9.5 -3.6Q-12.5 -1 -11 2.8L-2 3.3z" fill="#3a80c6"/><circle cx="0" cy="0" r="3.6" fill="#e2a85c" stroke="#b57a35" stroke-width="0.7"/></g></svg>
<svg class="a" style="left:943px;top:71px" width="5" height="4" viewBox="0 0 5 4"><path d="M0 0h5l-2.5 4z" fill="#5f5f5f"/></svg>
<svg class="a" style="left:959px;top:61px" width="34" height="28" viewBox="0 0 34 28"><rect x="0.5" y="0.5" width="26" height="22" fill="#fff" stroke="#b0b0b0" stroke-width="0.9"/><rect x="5.5" y="5" width="15.5" height="12.5" fill="#d6e5f5"/><path d="M5.5 0.5v22M21 0.5v22M0.5 5h26M0.5 17.5h26" stroke="#c2c2c2" stroke-width="0.8"/><g transform="translate(15.7 20) rotate(-42.5)"><rect x="1" y="-1.9" width="21.5" height="3.8" rx="1.9" fill="#e8e8e8" stroke="#8a8a8a" stroke-width="0.8"/><path d="M-2 -3.3L-9.5 -3.6Q-12.5 -1 -11 2.8L-2 3.3z" fill="#3a80c6"/><circle cx="0" cy="0" r="3.6" fill="#e2a85c" stroke="#b57a35" stroke-width="0.7"/></g></svg>
<svg class="a" style="left:994px;top:71px" width="5" height="4" viewBox="0 0 5 4"><path d="M0 0h5l-2.5 4z" fill="#5f5f5f"/></svg>
<svg class="a" style="left:1024px;top:53px" width="20" height="17" viewBox="0 0 20 17"><rect x="5.5" y="0.5" width="12" height="15.5" fill="#fff" stroke="#9a9a9a" stroke-width="0.9"/><path d="M11.5 0.5v15.5M5.5 10.8h12" stroke="#9a9a9a" stroke-width="0.8"/><rect x="6" y="5.3" width="12" height="4.6" fill="#4fb055"/><path d="M11.7 5.3v4.6" stroke="#fff" stroke-width="0.6"/><path d="M0.5 7.6l4.6-4.3v2.2h2v4.2h-2v2.2z" fill="#4fb055"/></svg>
<svg class="a" style="left:1082px;top:60px" width="5" height="4" viewBox="0 0 5 4"><path d="M0 0h5l-2.5 4z" fill="#5f5f5f"/></svg>
<svg class="a" style="left:1024px;top:77px" width="20" height="17" viewBox="0 0 20 17"><rect x="2.5" y="0.5" width="11" height="15.5" fill="#fff" stroke="#9a9a9a" stroke-width="0.9"/><path d="M8 0.5v15.5M2.5 11h11" stroke="#9a9a9a" stroke-width="0.8"/><rect x="0.5" y="5.3" width="14" height="4.6" fill="#e04848"/><path d="M8 5.3v4.6" stroke="#fff" stroke-width="0.6"/><path d="M15 5.5l3.6 3.8M18.6 5.5l-3.6 3.8" stroke="#e04848" stroke-width="1.4"/></svg>
<svg class="a" style="left:1086px;top:83px" width="5" height="4" viewBox="0 0 5 4"><path d="M0 0h5l-2.5 4z" fill="#5f5f5f"/></svg>
<svg class="a" style="left:1024px;top:99px" width="20" height="18" viewBox="0 0 20 18"><path d="M1.5 0.5v3M12.5 0.5v3M2 2h10M3.5 0.8l-1.5 1.2 1.5 1.2M10.5 0.8l1.5 1.2-1.5 1.2" stroke="#3a80c6" stroke-width="0.9" fill="none"/><rect x="0.7" y="5.3" width="17.5" height="11.8" fill="#fff" stroke="#9a9a9a" stroke-width="0.9"/><path d="M4.9 5.3v11.8M13.9 5.3v11.8M0.7 9.3h17.5M0.7 13.2h17.5" stroke="#c2c2c2" stroke-width="0.8"/><rect x="4.9" y="7.2" width="4.8" height="8.2" fill="#3a80c6"/></svg>
<svg class="a" style="left:1086px;top:106px" width="5" height="4" viewBox="0 0 5 4"><path d="M0 0h5l-2.5 4z" fill="#5f5f5f"/></svg>
<svg class="a" style="left:1119px;top:53px" width="15" height="18" viewBox="0 0 15 18"><path d="M1 1.2h11.8v4h-0.9l-0.7-2.2h-7.3l5.5 7.6-5.8 7h8.2l0.8-2.6h0.9v4.4h-12.6v-0.9l6.2-7.5-6.1-8.6z" fill="#606060" stroke="#606060" stroke-width="0.9" stroke-linejoin="round"/></svg>
<svg class="a" style="left:1141px;top:61px" width="5" height="4" viewBox="0 0 5 4"><path d="M0 0h5l-2.5 4z" fill="#5f5f5f"/></svg>
<svg class="a" style="left:1118px;top:77px" width="16" height="16" viewBox="0 0 16 16"><rect x="0.6" y="0.6" width="13.6" height="14.4" fill="#fff" stroke="#9a9a9a" stroke-width="0.9"/><rect x="0.6" y="0.6" width="13.6" height="2.6" fill="#c8c8c8"/><path d="M5.2 5.5h3.6v3.3h2.4l-4.2 4.4-4.2-4.4h2.4z" fill="#3a80c6"/></svg>
<svg class="a" style="left:1139px;top:83px" width="5" height="4" viewBox="0 0 5 4"><path d="M0 0h5l-2.5 4z" fill="#5f5f5f"/></svg>
<svg class="a" style="left:1117px;top:100px" width="18" height="16" viewBox="0 0 18 16"><g transform="rotate(-40 9 8)"><rect x="1.5" y="4.2" width="15" height="7.5" rx="1.5" fill="#f08aa0" stroke="#c24a66" stroke-width="0.8"/><path d="M1.5 9.3h15" stroke="#c24a66" stroke-width="0.6"/></g></svg>
<svg class="a" style="left:1139px;top:106px" width="5" height="4" viewBox="0 0 5 4"><path d="M0 0h5l-2.5 4z" fill="#5f5f5f"/></svg>
<div class="a" style="left:1158px;top:58px;font-size:14.5px;color:#3a80c6;line-height:15px;font-weight:bold">A</div>
<div class="a" style="left:1158px;top:72px;font-size:14.5px;color:#666;line-height:15px;font-weight:bold">Z</div>
<svg class="a" style="left:1170px;top:63px" width="20" height="21" viewBox="0 0 20 21"><ellipse cx="9.5" cy="3.3" rx="8.8" ry="2.8" fill="#d0d0d0" stroke="#707070" stroke-width="0.8"/><path d="M0.7 3.3q0.5 4.5 6.5 8.2v7.3a2.3 2.3 0 0 0 4.6 0v-7.3q6-3.7 6.5-8.2" fill="#8a8a8a" stroke="#707070" stroke-width="0.8"/><ellipse cx="9.5" cy="3.3" rx="7.5" ry="2" fill="#f2f2f2"/></svg>
<svg class="a" style="left:1193px;top:71px" width="5" height="4" viewBox="0 0 5 4"><path d="M0 0h5l-2.5 4z" fill="#5f5f5f"/></svg>
<svg class="a" style="left:73px;top:125px" width="8" height="18" viewBox="0 0 8 18"><path d="M0.3 5.3h7l-3.5-5z" fill="#6a6a6a"/><path d="M0.3 12h7l-3.5 5z" fill="#6a6a6a"/></svg>
<svg class="a" style="left:100px;top:129px" width="12" height="11" viewBox="0 0 12 11"><path d="M1 1l10 9.5M11 1l-10 9.5" stroke="#c4c4c4" stroke-width="1.5"/></svg>
<svg class="a" style="left:127px;top:129px" width="16" height="11" viewBox="0 0 16 11"><path d="M1 5.5l4.2 4.2 9.5-9" fill="none" stroke="#c4c4c4" stroke-width="1.7"/></svg>
<div class="a" style="left:158px;top:125px;font-family:'Liberation Serif',serif;font-style:italic;font-size:16px;color:#333;line-height:18px">fx</div>
<div class="a" style="left:180px;top:128px;width:1px;height:14px;background:#e0e0e0"></div>
<svg class="a" style="left:1268px;top:131px" width="8" height="6" viewBox="0 0 8 6"><path d="M0.5 0.5h7l-3.5 5z" fill="#555"/></svg>
<svg class="a" style="left:211px;top:173px" width="13" height="12" viewBox="0 0 13 12"><path d="M5 2h6.8l-2.6 3v4.6h-1.6v-4.6z" fill="#444"/><path d="M1.2 6.3h4.3l-2.15 2.7z" fill="#444"/></svg>
<svg class="a" style="left:14px;top:683px" width="9" height="12" viewBox="0 0 9 12"><path d="M8.5 0.5v10.5l-8-5.25z" fill="#909090"/></svg>
<svg class="a" style="left:37px;top:683px" width="9" height="12" viewBox="0 0 9 12"><path d="M0.5 0.5v10.5l8-5.25z" fill="#909090"/></svg>
<svg class="a" style="left:1006px;top:706px" width="15" height="15" viewBox="0 0 15 15"><rect x="1.0" y="1.0" width="3.4" height="3.4" fill="#f2f2f2"/><rect x="1.0" y="5.5" width="3.4" height="3.4" fill="#f2f2f2"/><rect x="1.0" y="10.0" width="3.4" height="3.4" fill="#f2f2f2"/><rect x="5.5" y="1.0" width="3.4" height="3.4" fill="#f2f2f2"/><rect x="5.5" y="5.5" width="3.4" height="3.4" fill="#f2f2f2"/><rect x="5.5" y="10.0" width="3.4" height="3.4" fill="#f2f2f2"/><rect x="10.0" y="1.0" width="3.4" height="3.4" fill="#f2f2f2"/><rect x="10.0" y="5.5" width="3.4" height="3.4" fill="#f2f2f2"/><rect x="10.0" y="10.0" width="3.4" height="3.4" fill="#f2f2f2"/></svg>
<svg class="a" style="left:1041px;top:706px" width="16" height="16" viewBox="0 0 16 16"><rect x="0.8" y="0.8" width="13.5" height="13.5" fill="none" stroke="#4a4a4a" stroke-width="1.3"/><rect x="3.5" y="3.3" width="8" height="8.6" fill="none" stroke="#4a4a4a" stroke-width="0.9"/><path d="M5 5.5h5M5 7.6h5M5 9.7h5" stroke="#4a4a4a" stroke-width="0.8"/></svg>
<div class="a" style="left:1075px;top:713px;width:8px;height:2px;background:#4a4a4a"></div>
<svg class="a" style="left:1196px;top:709px" width="10" height="10" viewBox="0 0 10 10"><path d="M4.6 0.5v8.6M0.5 4.8h8.6" stroke="#4a4a4a" stroke-width="2"/></svg>
</body></html>
